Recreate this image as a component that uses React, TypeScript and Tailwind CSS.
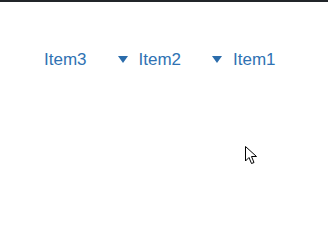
import React from 'react';

const Caret: React.FC = () => (
  <svg width="10" height="8" viewBox="0 0 10 8" className="shrink-0">
    <polygon points="0,0 10,0 5,7" fill="#2b6cab" />
  </svg>
);

export default function App() {
  const items = ['Item3', 'Item2', 'Item1'];

  return (
    <div className="relative w-[328px] h-[226px] bg-white overflow-hidden" style={{ fontFamily: '"Liberation Sans", Arial, sans-serif' }}>
      <div className="h-[2px] bg-[#212529]" />
      <div className="flex items-center pl-[44px] pt-[47px] text-[17px] text-[#2f72b3]">
        {items.map((item, i) => (
          <div key={item} className="flex items-center">
            {i > 0 && (
              <span className="ml-[31px] mr-[11px] flex items-center">
                <Caret />
              </span>
            )}
            <span className="leading-[22px]">{item}</span>
          </div>
        ))}
      </div>

      {/* mouse pointer */}
      <svg className="absolute left-[245px] top-[146px]" width="14" height="20" viewBox="0 0 14 20">
        <path d="M0.5 0.5 L0.5 15 L4 11.5 L6.5 17.5 L9 16.5 L6.5 10.5 L11.5 10.5 Z" fill="#fff" stroke="#000" strokeWidth="1" />
      </svg>
    </div>
  );
}
